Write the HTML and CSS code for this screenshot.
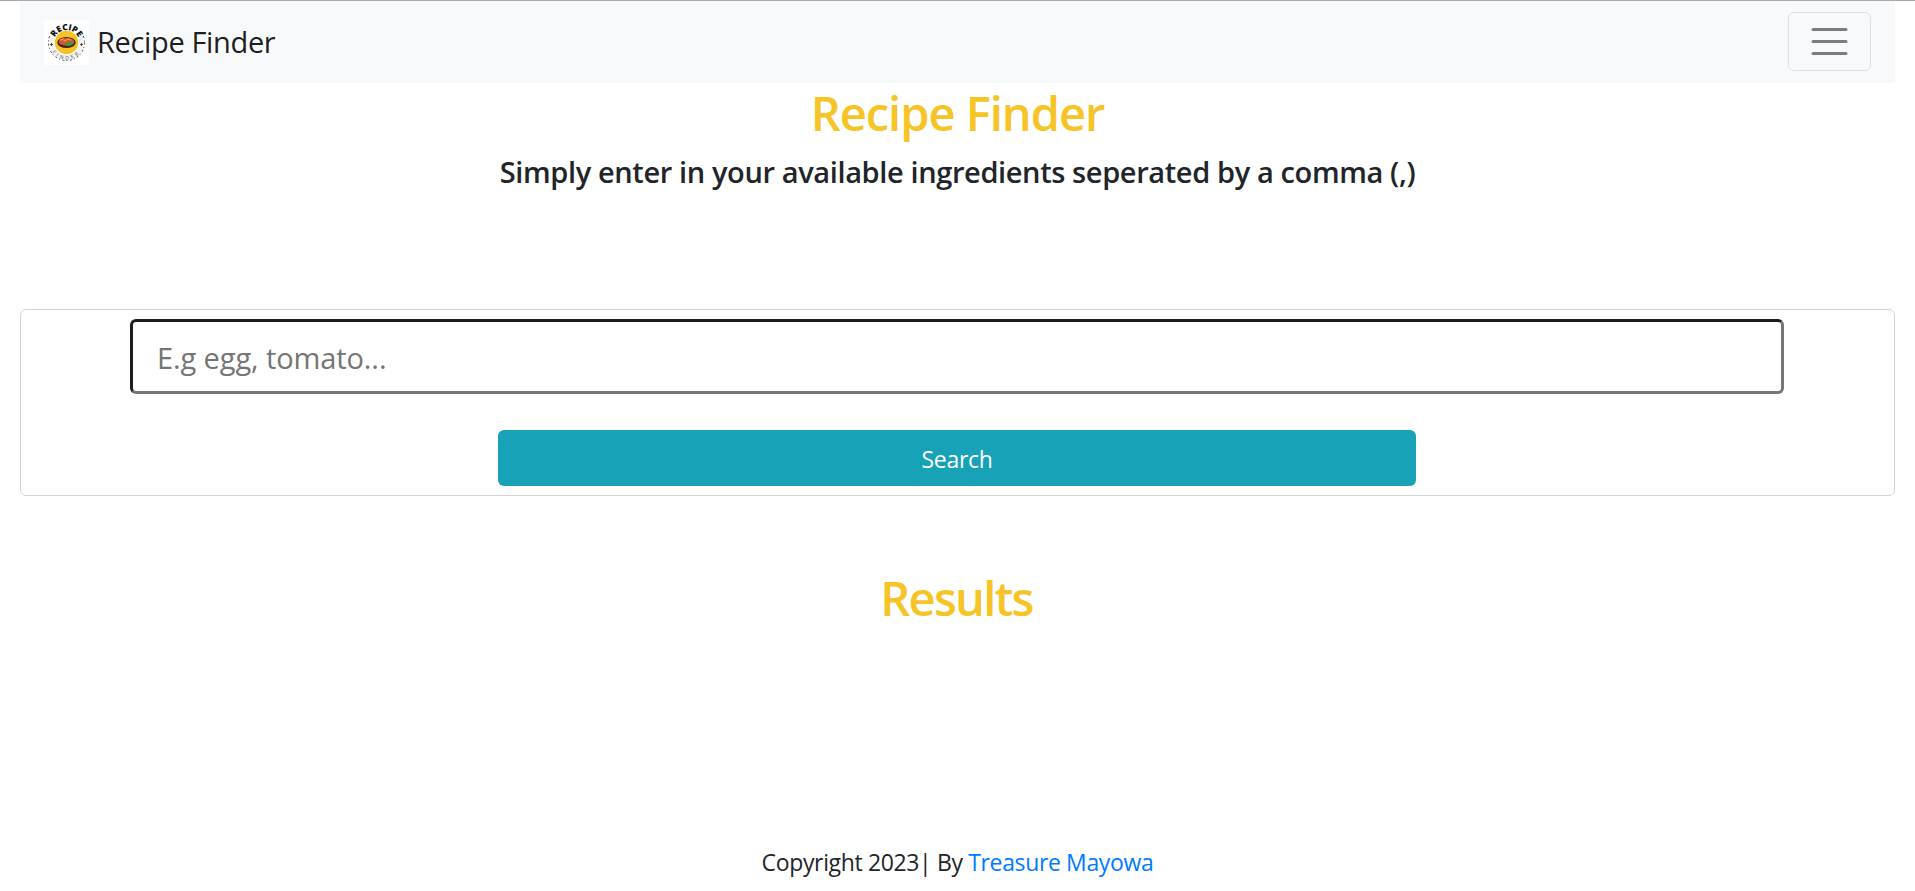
FILE: index.html
```html
<!DOCTYPE html>
<html lang="en">
<head>
  <meta charset="UTF-8" />
  <meta name="viewport" content="width=device-width, initial-scale=1" />
  <title>Recipe Finder</title>
  <link rel="stylesheet" href="styles.css">
</head>
<body>
  <div class="container">
    <nav class="navbar">
      <a class="navbar-brand" href="#">
        <svg class="logo" width="45" height="45" viewBox="0 0 45 45">
          <rect width="45" height="45" fill="#fff"/>
          <path id="arc-top" d="M9.7 22.5 A12.8 12.4 0 0 1 35.3 22.5" fill="none"/>
          <path id="arc-bottom" d="M5.5 22.5 A17 17 0 0 0 39.5 22.5" fill="none"/>
          <circle cx="22.5" cy="22.5" r="18" fill="none" stroke="#333" stroke-width="1" stroke-dasharray="2 2.4 1 2" pathLength="110"/>
          <circle cx="22.5" cy="22.5" r="15" fill="none" stroke="#f1f1f1" stroke-width="5"/>
          <path d="M6 13 L11 3 H34 L39 13 L34 17 H11z" fill="#fff"/>
          <circle cx="22.5" cy="22.5" r="11.7" fill="#f6c324"/>
          <text class="logo-top"><textPath href="#arc-top" startOffset="50%">RECIPE</textPath></text>
          <text class="logo-bottom"><textPath href="#arc-bottom" startOffset="50%">FINDER</textPath></text>
          <path d="M6 24.5h3M7.5 23v3M36 24.5h3M37.5 23v3" stroke="#333" stroke-width=".8"/>
          <ellipse cx="22.5" cy="22.5" rx="9.2" ry="5.6" fill="#4b2518"/>
          <ellipse cx="22.5" cy="21.8" rx="7.8" ry="3.8" fill="#d9532c"/>
          <path d="M16 20l3-1 2 2 3-2 3 1" fill="none" stroke="#f08a4b" stroke-width="1.4"/>
          <path d="M20 25q2-3 5-2 1-3 5-1-1 4-6 4z" fill="#3f9a3b"/>
        </svg>
        <span>Recipe Finder</span>
      </a>
      <button class="navbar-toggler" aria-label="Menu">
        <svg width="45" height="45" viewBox="0 0 30 30">
          <path stroke="rgba(0,0,0,.5)" stroke-linecap="round" stroke-width="2" d="M4 7h22M4 15h22M4 23h22"/>
        </svg>
      </button>
    </nav>

    <header>
      <h1>Recipe Finder</h1>
      <h4>Simply enter in your available ingredients seperated by a comma (,)</h4>
    </header>

    <form class="search-box">
      <input type="text" class="ingredients" placeholder="E.g egg, tomato...">
      <button type="button" class="btn-search">Search</button>
    </form>

    <section class="results">
      <h1>Results</h1>
    </section>

    <footer>
      <p>Copyright 2023| By <a href="#">Treasure Mayowa</a></p>
    </footer>
  </div>
</body>
</html>
```
FILE: styles.css
```css
* {
  box-sizing: border-box;
}
body {
  margin: 0;
  font-family: "Segoe UI", "Open Sans", "Noto Sans", sans-serif;
  font-size: 24px;
  line-height: 36px;
  color: #212529;
  background: #fff;
  border-top: 1px solid #aaaaad;
  overflow: hidden;
}
.container {
  padding: 0 20px;
}
a {
  color: #007bff;
  text-decoration: none;
}
.navbar {
  display: flex;
  align-items: center;
  justify-content: space-between;
  height: 82px;
  padding: 0 24px;
  background: #f8f9fa;
}
.navbar-brand {
  display: flex;
  align-items: center;
  gap: 8px;
  font-size: 29px;
  letter-spacing: -0.35px;
  color: rgba(0,0,0,0.9);
}
.logo {
  display: block;
  letter-spacing: 0;
}
.logo-top {
  font-size: 8.5px;
  font-weight: 800;
  text-anchor: middle;
  fill: #111;
}
.logo-bottom {
  font-size: 5px;
  letter-spacing: 2.6px;
  text-anchor: middle;
  fill: #555;
}
.navbar-toggler {
  display: flex;
  align-items: center;
  justify-content: center;
  width: 83px;
  height: 59px;
  margin-bottom: 1px;
  padding: 0;
  background: transparent;
  border: 1px solid rgba(0,0,0,0.1);
  border-radius: 6px;
}
header {
  text-align: center;
}
h1 {
  margin: 0;
  padding-top: 1px;
  font-size: 47px;
  font-weight: 600;
  line-height: 58px;
  letter-spacing: -1px;
  color: #f6c426;
}
h4 {
  margin: 12px 0 0;
  font-size: 29px;
  font-weight: 600;
  line-height: 36px;
  letter-spacing: -0.38px;
}
.search-box {
  display: flex;
  flex-direction: column;
  align-items: center;
  height: 187px;
  margin-top: 119px;
  padding: 9px 1px 0 0;
  border: 1px solid #ced4da;
  border-radius: 6px;
}
.ingredients {
  width: 1654px;
  height: 75px;
  padding: 2px 24px 0;
  font-family: inherit;
  font-size: 29px;
  letter-spacing: -0.1px;
  border: 3px solid;
  border-color: #1c1e1e #767676 #767676 #1c1e1e;
  border-radius: 6px;
}
.ingredients::placeholder {
  color: #757575;
}
.btn-search {
  width: 918px;
  height: 56px;
  margin-top: 36px;
  padding: 2px 0 0;
  font-family: inherit;
  font-size: 23px;
  letter-spacing: -0.3px;
  color: #fff;
  background: #17a2b8;
  border: none;
  border-radius: 6px;
}
.results {
  height: 258px;
  padding-top: 72px;
  text-align: center;
}
.results h1 {
  padding-right: 2px;
  letter-spacing: -1.7px;
}
footer {
  padding-top: 90px;
  text-align: center;
}
footer p {
  margin: 0;
  font-size: 23px;
  letter-spacing: -0.36px;
}
```
